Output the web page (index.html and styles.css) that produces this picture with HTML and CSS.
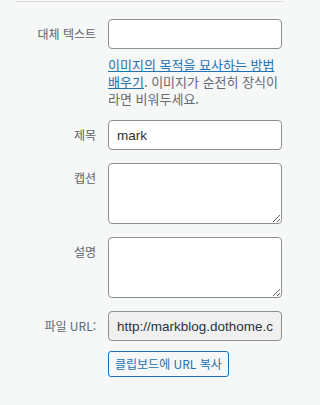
FILE: index.html
```html
<!DOCTYPE html>
<html lang="ko">
<head>
<meta charset="utf-8">
<link rel="stylesheet" href="styles.css">
</head>
<body>
<div class="panel">
  <div class="divider"></div>
  <div class="settings">
    <label class="name" for="alt">대체 텍스트</label>
    <div class="field">
      <input id="alt" class="text" type="text">
      <p class="desc"><a href="#" class="link">이미지의 목적을 묘사하는 방법 배우기</a>. 이미지가 순전히 장식이라면 비워두세요.</p>
    </div>

    <label class="name" for="title">제목</label>
    <div class="field"><input id="title" class="text" type="text" value="mark"></div>

    <label class="name" for="caption">캡션</label>
    <div class="field"><textarea id="caption" class="area"></textarea></div>

    <label class="name" for="descr">설명</label>
    <div class="field"><textarea id="descr" class="area"></textarea></div>

    <label class="name" for="url">파일 URL:</label>
    <div class="field">
      <input id="url" class="text readonly" type="text" readonly value="http://markblog.dothome.co.kr/wp-content/uploads/mark.png">
      <button class="copy" type="button">클립보드에 URL 복사</button>
    </div>
  </div>
</div>
</body>
</html>
```

FILE: styles.css
```css
html, body {
  margin: 0;
  padding: 0;
  background: #f6f7f7;
}
body {
  font-family: "Noto Sans CJK KR", "Liberation Sans", sans-serif;
  color: #646970;
}
.panel {
  width: 267px;
  padding: 1px 7px 0 16px;
}
.divider {
  height: 1px;
  background: #dcdcde;
}
.settings {
  display: grid;
  grid-template-columns: 80px 174px;
  column-gap: 12px;
  row-gap: 13px;
  padding-top: 17px;
}
.name {
  font-size: 12px;
  line-height: 30px;
  text-align: right;
  color: #5f656b;
  white-space: nowrap;
}
.field {
  display: flex;
  flex-direction: column;
  min-width: 0;
}
.text, .area {
  box-sizing: border-box;
  width: 174px;
  margin: 0;
  border: 1px solid #8c8f94;
  border-radius: 4px;
  background: #fff;
  color: #2c3338;
  font-family: "Liberation Sans", sans-serif;
  font-size: 13.5px;
  padding: 0 8px;
  outline: none;
}
.text {
  height: 30px;
}
.area {
  height: 61px;
  display: block;
  resize: vertical;
  padding: 4px 8px;
}
.readonly {
  background: #f0f0f1;
}
.desc {
  margin: 7px 0 0;
  font-size: 13px;
  line-height: 17px;
  color: #646970;
}
.link {
  color: #2271b1;
  text-decoration: underline;
}
.copy {
  align-self: flex-start;
  margin-top: 10px;
  height: 26px;
  padding: 0 6px;
  border: 1px solid #2271b1;
  border-radius: 3px;
  background: #f6f7f7;
  color: #2271b1;
  font-family: "Noto Sans CJK KR", "Liberation Sans", sans-serif;
  font-size: 12px;
  line-height: 24px;
  white-space: nowrap;
}
```
